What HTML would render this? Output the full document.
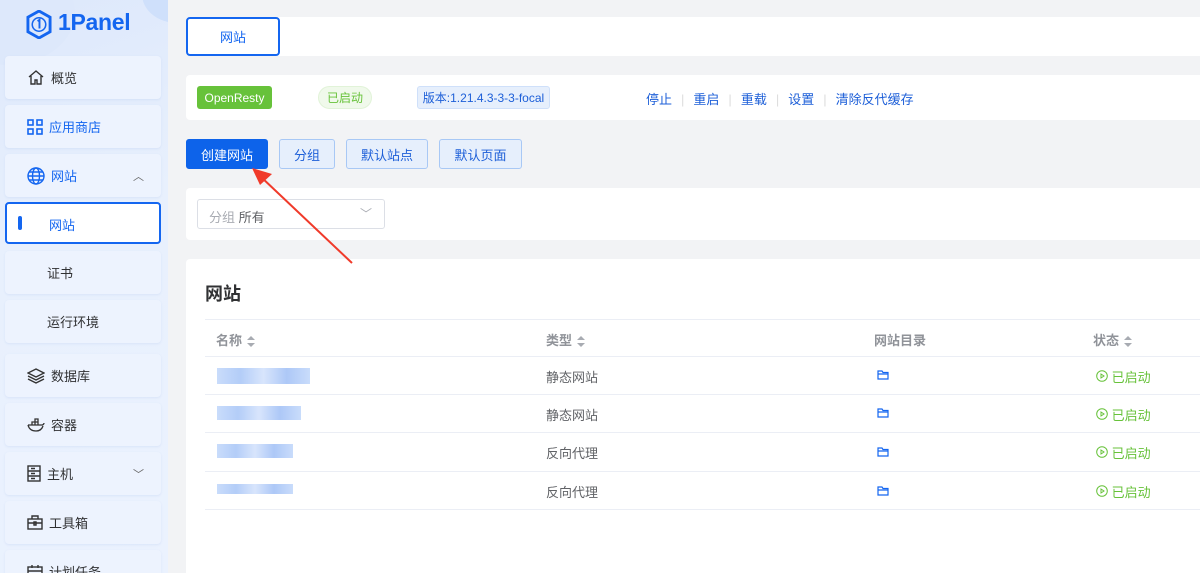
<!DOCTYPE html>
<html><head><meta charset="utf-8"><style>
*{box-sizing:border-box;margin:0;padding:0}
body{width:1200px;height:573px;overflow:hidden;background:#f2f3f5;font-family:"Liberation Sans","Noto Sans CJK SC",sans-serif;font-size:13px;color:#303133;position:relative}
.abs{position:absolute}
.side{left:0;top:0;width:168px;height:573px;background:linear-gradient(160deg,#dde8fb 0%,#e8f0fd 40%,#ebf2fe 100%);overflow:hidden}
.mi{position:absolute;left:5px;width:156px;height:43px;background:#edf3fe;border-radius:4px;box-shadow:0 1px 2px rgba(180,200,240,.3);display:flex;align-items:center;padding-left:22px;color:#303133}
.mi svg{margin-right:6px}
.card{background:#fff;position:absolute}
.btn{position:absolute;height:30px;border:1px solid #a8c8f5;background:#e6effc;color:#1d5fd8;border-radius:3px;display:flex;align-items:center;justify-content:center;font-size:13px}
.th{position:absolute;top:330px;color:#909399;font-weight:bold;font-size:13px}
.row{position:absolute;left:205px;width:995px;border-top:1px solid #ebeef5}
.blur{position:absolute;height:12px;background:linear-gradient(90deg,#c9dcfb,#b3cdf8,#d8e5fc,#adc8f7,#c9dcfb)}
.green{color:#67c23a}
.sorter{display:inline-block;width:8px;margin-left:5px;vertical-align:middle}
</style></head><body>
<div class="abs side">
  <div class="abs" style="left:142px;top:-35px;width:70px;height:58px;border-radius:50%;background:#cfe0fb"></div>
  <div class="abs" style="left:-60px;top:-40px;width:135px;height:105px;border-radius:50%;background:#dde8fb"></div>
  <svg class="abs" style="left:26px;top:10px" width="26" height="29" viewBox="0 0 27 30"><polygon points="13.5,1 25,7.5 25,22.5 13.5,29 2,22.5 2,7.5" fill="none" stroke="#1466f0" stroke-width="3"/><circle cx="13.5" cy="15" r="7" fill="none" stroke="#1466f0" stroke-width="1.6"/><path d="M12 11.5l2-1.3v9" stroke="#1466f0" stroke-width="2" fill="none"/></svg>
  <div class="abs" style="left:58px;top:9px;font-size:23px;font-weight:bold;color:#1466f0;letter-spacing:-0.3px">1Panel</div>
  <div class="mi" style="top:56px"><svg width="18" height="17" viewBox="0 0 18 17"><path d="M2 8L9 2l7 6M4 7v8h4v-4h2v4h4V7" fill="none" stroke="#333" stroke-width="1.4"/></svg>概览</div>
  <div class="mi" style="top:105px;color:#1466f0"><svg width="16" height="16" viewBox="0 0 16 16" fill="none" stroke="#1466f0" stroke-width="1.6"><rect x="1" y="1" width="5" height="5"/><rect x="10" y="1" width="5" height="5"/><rect x="1" y="10" width="5" height="5"/><rect x="10" y="10" width="5" height="5"/></svg>应用商店</div>
  <div class="mi" style="top:154px;color:#1466f0"><svg width="18" height="18" viewBox="0 0 18 18" fill="none" stroke="#1466f0" stroke-width="1.4"><circle cx="9" cy="9" r="8"/><ellipse cx="9" cy="9" rx="3.5" ry="8"/><path d="M1 9h16M2.5 5h13M2.5 13h13"/></svg>网站<span style="position:absolute;left:128px;font-size:11px;color:#666">︿</span></div>
  <div class="abs" style="left:5px;top:202px;width:156px;height:42px;background:#fff;border:2px solid #1466f0;border-radius:4px"><div class="abs" style="left:11px;top:12px;width:4px;height:14px;background:#1466f0;border-radius:2px"></div><div class="abs" style="left:42px;top:11px;color:#1466f0">网站</div></div>
  <div class="mi" style="top:251px;padding-left:42px">证书</div>
  <div class="mi" style="top:300px;padding-left:42px">运行环境</div>
  <div class="mi" style="top:354px"><svg width="18" height="16" viewBox="0 0 18 16" fill="none" stroke="#333" stroke-width="1.4"><path d="M9 1l8 4-8 4-8-4z"/><path d="M1 8l8 4 8-4M1 11l8 4 8-4"/></svg>数据库</div>
  <div class="mi" style="top:403px"><svg width="18" height="14" viewBox="0 0 18 14" fill="none" stroke="#333" stroke-width="1.3"><path d="M1 7h14c1 0 2-1 2-2M1 7c1 4 4 6 8 6s6-2 7-5M5 4h3v3H5zM8 4h3v3H8zM8 1h3v3H8z"/></svg>容器</div>
  <div class="mi" style="top:452px"><svg width="14" height="17" viewBox="0 0 14 17" fill="none" stroke="#333" stroke-width="1.4"><rect x="1" y="1" width="12" height="15"/><path d="M1 6h12M1 11h12M4 3.5h4M4 8.5h4M4 13.5h4"/></svg>主机<span style="position:absolute;left:128px;font-size:11px;color:#666">﹀</span></div>
  <div class="mi" style="top:501px"><svg width="16" height="15" viewBox="0 0 16 15" fill="none" stroke="#333" stroke-width="1.4"><rect x="1" y="4" width="14" height="10"/><path d="M5 4V1h6v3M1 8h14M7 7h2v3H7z"/></svg>工具箱</div>
  <div class="mi" style="top:550px"><svg width="16" height="15" viewBox="0 0 16 15" fill="none" stroke="#333" stroke-width="1.4"><rect x="1" y="3" width="14" height="11"/><path d="M5 1v3M11 1v3M1 7h14"/></svg>计划任务</div>
</div>
<div class="card" style="left:186px;top:17px;width:1014px;height:39px;border-radius:4px 0 0 4px"></div>
<div class="abs" style="left:186px;top:17px;width:94px;height:39px;border:2px solid #1466f0;border-radius:4px;background:#fff;color:#1466f0;display:flex;align-items:center;justify-content:center;font-size:13px">网站</div>
<div class="card" style="left:186px;top:75px;width:1014px;height:45px;border-radius:4px 0 0 4px">
  <div class="abs" style="left:11px;top:11px;width:75px;height:23px;background:#67c23a;color:#fff;border-radius:3px;font-size:12px;display:flex;align-items:center;justify-content:center">OpenResty</div>
  <div class="abs" style="left:132px;top:11px;width:54px;height:23px;background:#f0f9eb;border:1px solid #e1f3d8;color:#67c23a;border-radius:12px;font-size:12px;display:flex;align-items:center;justify-content:center">已启动</div>
  <div class="abs" style="left:231px;top:11px;width:133px;height:23px;background:#e6effc;border:1px solid #cfe0fa;color:#1d5fd8;border-radius:3px;font-size:12px;display:flex;align-items:center;justify-content:center">版本:1.21.4.3-3-3-focal</div>
  <div class="abs" style="left:460px;top:14px;color:#1d5fd8;font-size:13px;white-space:nowrap">停止<span style="color:#ddd;margin:0 9px">|</span>重启<span style="color:#ddd;margin:0 9px">|</span>重载<span style="color:#ddd;margin:0 9px">|</span>设置<span style="color:#ddd;margin:0 9px">|</span>清除反代缓存</div>
</div>
<div class="btn" style="left:186px;top:139px;width:82px;background:#0d63ea;border-color:#0d63ea;color:#fff">创建网站</div>
<div class="btn" style="left:279px;top:139px;width:56px">分组</div>
<div class="btn" style="left:346px;top:139px;width:82px">默认站点</div>
<div class="btn" style="left:439px;top:139px;width:83px">默认页面</div>
<div class="card" style="left:186px;top:188px;width:1014px;height:52px;border-radius:4px 0 0 4px">
  <div class="abs" style="left:11px;top:11px;width:188px;height:30px;border:1px solid #dcdfe6;border-radius:3px;padding:7px 11px;color:#606266"><span style="color:#a8abb2">分组</span> 所有<span style="position:absolute;right:12px;top:5px;color:#a8abb2;font-size:12px">﹀</span></div>
</div>
<div class="card" style="left:186px;top:259px;width:1014px;height:314px;border-radius:4px 0 0 0">
  <div class="abs" style="left:19px;top:21px;font-size:18px;font-weight:bold;color:#303133">网站</div>
</div>
<div class="row" style="top:319px"></div>
<div class="th" style="left:216px">名称<svg class="sorter" width="8" height="11" viewBox="0 0 8 11"><path d="M4 0l4 4H0zM4 11l4-4H0z" fill="#a8abb2"/></svg></div>
<div class="th" style="left:546px">类型<svg class="sorter" width="8" height="11" viewBox="0 0 8 11"><path d="M4 0l4 4H0zM4 11l4-4H0z" fill="#a8abb2"/></svg></div>
<div class="th" style="left:874px">网站目录</div>
<div class="th" style="left:1093px">状态<svg class="sorter" width="8" height="11" viewBox="0 0 8 11"><path d="M4 0l4 4H0zM4 11l4-4H0z" fill="#a8abb2"/></svg></div>
<div class="row" style="top:356px"></div>
<div class="row" style="top:394px"></div>
<div class="row" style="top:432px"></div>
<div class="row" style="top:471px"></div>
<div class="row" style="top:509px"></div>
<div class="blur" style="left:217px;top:368px;width:93px;height:16px"></div>
<div class="blur" style="left:217px;top:406px;width:84px;height:14px"></div>
<div class="blur" style="left:217px;top:444px;width:76px;height:14px"></div>
<div class="blur" style="left:217px;top:484px;width:76px;height:10px"></div>
<div class="abs" style="left:546px;top:367px;color:#606266">静态网站</div>
<div class="abs" style="left:546px;top:405px;color:#606266">静态网站</div>
<div class="abs" style="left:546px;top:443px;color:#606266">反向代理</div>
<div class="abs" style="left:546px;top:482px;color:#606266">反向代理</div>
<svg class="abs" style="left:877px;top:370px" width="12" height="10" viewBox="0 0 12 10" fill="none" stroke="#1466f0" stroke-width="1.2"><path d="M1 1h4l1 1.5h5V9H1zM1 4h10"/></svg>
<svg class="abs" style="left:877px;top:408px" width="12" height="10" viewBox="0 0 12 10" fill="none" stroke="#1466f0" stroke-width="1.2"><path d="M1 1h4l1 1.5h5V9H1zM1 4h10"/></svg>
<svg class="abs" style="left:877px;top:447px" width="12" height="10" viewBox="0 0 12 10" fill="none" stroke="#1466f0" stroke-width="1.2"><path d="M1 1h4l1 1.5h5V9H1zM1 4h10"/></svg>
<svg class="abs" style="left:877px;top:486px" width="12" height="10" viewBox="0 0 12 10" fill="none" stroke="#1466f0" stroke-width="1.2"><path d="M1 1h4l1 1.5h5V9H1zM1 4h10"/></svg>
<div class="abs green" style="left:1096px;top:367px"><svg width="12" height="12" viewBox="0 0 12 12" fill="none" stroke="#67c23a"><circle cx="6" cy="6" r="5.3"/><path d="M5 4v4l3-2z"/></svg> 已启动</div>
<div class="abs green" style="left:1096px;top:405px"><svg width="12" height="12" viewBox="0 0 12 12" fill="none" stroke="#67c23a"><circle cx="6" cy="6" r="5.3"/><path d="M5 4v4l3-2z"/></svg> 已启动</div>
<div class="abs green" style="left:1096px;top:443px"><svg width="12" height="12" viewBox="0 0 12 12" fill="none" stroke="#67c23a"><circle cx="6" cy="6" r="5.3"/><path d="M5 4v4l3-2z"/></svg> 已启动</div>
<div class="abs green" style="left:1096px;top:482px"><svg width="12" height="12" viewBox="0 0 12 12" fill="none" stroke="#67c23a"><circle cx="6" cy="6" r="5.3"/><path d="M5 4v4l3-2z"/></svg> 已启动</div>
<svg class="abs" style="left:240px;top:160px" width="120" height="110" viewBox="0 0 120 110"><path d="M112 103L20 16" stroke="#f03a2a" stroke-width="2"/><path d="M12 8l20 6-12 11z" fill="#f03a2a"/></svg>
</body></html>
